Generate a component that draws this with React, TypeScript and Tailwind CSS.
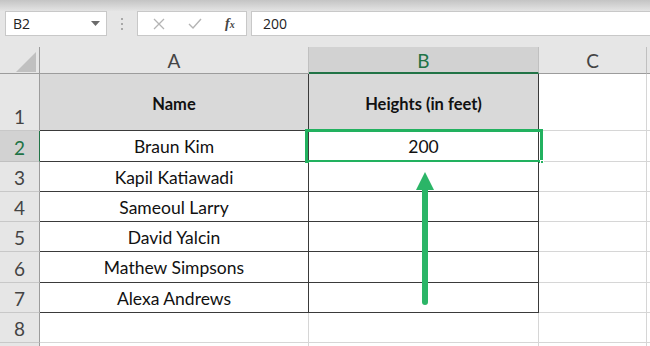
import React from "react";

type Row = { n: number; h: number; a?: string; b?: string; head?: boolean; table: boolean; hide?: boolean };

const rows: Row[] = [
  { n: 1, h: 57, a: "Name", b: "Heights (in feet)", head: true, table: true },
  { n: 2, h: 31, a: "Braun Kim", b: "200", table: true },
  { n: 3, h: 30, a: "Kapil Katiawadi", table: true },
  { n: 4, h: 30, a: "Sameoul Larry", table: true },
  { n: 5, h: 30, a: "David Yalcin", table: true },
  { n: 6, h: 31, a: "Mathew Simpsons", table: true },
  { n: 7, h: 30, a: "Alexa Andrews", table: true },
  { n: 8, h: 30, table: false },
  { n: 9, h: 12, table: false, hide: true },
];

const cellFont = { fontFamily: "Lato, 'Open Sans', sans-serif" };

export default function App() {
  return (
    <div className="w-[650px] h-[346px] overflow-hidden bg-[#e6e6e6] relative" style={cellFont}>
      {/* top shadow */}
      <div className="h-[11px] bg-gradient-to-b from-[#c4c4c4] to-[#e4e4e4]" />
      {/* formula bar */}
      <div className="h-[25px] flex items-stretch">
        <div
          className="ml-[5px] w-[102px] bg-white border border-[#c8c8c8] flex items-center pl-[7px] pr-[6px] text-[14px] text-[#222]"
          style={{ fontFamily: "'Open Sans', sans-serif" }}
        >
          <span className="flex-1">B2</span>
          <svg width="9" height="5" viewBox="0 0 9 5">
            <path d="M0 0 L9 0 L4.5 5 Z" fill="#6b6b6b" />
          </svg>
        </div>
        <div className="w-[30px] flex flex-col items-center justify-center gap-[3px]">
          <div className="w-[2px] h-[2px] bg-[#a8a8a8]" />
          <div className="w-[2px] h-[2px] bg-[#a8a8a8]" />
          <div className="w-[2px] h-[2px] bg-[#a8a8a8]" />
        </div>
        <div className="w-[110px] bg-white border border-[#c8c8c8] flex items-center">
          <svg className="ml-[15px]" width="12" height="12" viewBox="0 0 12 12">
            <path d="M1 1 L11 11 M11 1 L1 11" stroke="#b4b4b4" strokeWidth="1.3" />
          </svg>
          <svg className="ml-[23px]" width="14" height="11" viewBox="0 0 14 11">
            <path d="M1 6 L5 10 L13 1" stroke="#b4b4b4" strokeWidth="1.4" fill="none" />
          </svg>
          <span
            className="ml-[23px] text-[14px] italic text-[#444] font-bold"
            style={{ fontFamily: "'Liberation Serif', serif" }}
          >
            f<span className="text-[10px]">x</span>
          </span>
        </div>
        <div
          className="ml-[4px] flex-1 bg-white border border-[#c8c8c8] border-r-0 flex items-center pl-[11px] text-[14px] text-[#222]"
          style={{ fontFamily: "'Open Sans', sans-serif" }}
        >
          200
        </div>
      </div>
      <div className="h-[11px]" />
      {/* sheet */}
      <div className="relative">
        {/* column headers */}
        <div className="flex h-[27px] text-[19px] text-[#444]">
          <div className="w-[40px] border-r border-b border-[#9c9c9c] relative">
            <svg className="absolute left-[16px] top-[5px]" width="20" height="20" viewBox="0 0 20 20">
              <path d="M0 20 L20 20 L20 0 Z" fill="#c0c0c0" />
            </svg>
          </div>
          <div className="w-[269px] border-r border-b border-r-[#c0c0c0] border-b-[#9c9c9c] flex items-center justify-center pt-[2px]">
            A
          </div>
          <div className="w-[230px] bg-[#d2d2d2] border-r border-r-[#c0c0c0] border-b-2 border-b-[#217346] flex items-center justify-center pt-[3px] text-[#217346]">
            B
          </div>
          <div className="w-[108px] border-r border-b border-r-[#c0c0c0] border-b-[#9c9c9c] flex items-center justify-center pt-[2px]">
            C
          </div>
          <div className="flex-1 border-b border-[#9c9c9c]" />
        </div>
        {rows.map((r) => {
          const sel = r.n === 2;
          const tb = r.table ? "border-[#3a3a3a]" : "border-[#d6d6d6]";
          return (
            <div key={r.n} className="flex" style={{ height: r.h }}>
              <div
                className={`w-[40px] border-r border-b flex items-end justify-center pb-[1px] text-[19px] leading-[24px] ${
                  sel
                    ? "bg-[#d2d2d2] text-[#217346] border-r-[#217346] border-b-[#c0c0c0]"
                    : "text-[#444] border-r-[#9c9c9c] border-b-[#c8c8c8]"
                }`}
              >
                {r.hide ? null : r.n}
              </div>
              <div
                className={`w-[269px] border-r border-b ${tb} flex items-center justify-center text-[#111] ${
                  r.head ? "bg-[#d9d9d9] font-bold pt-[5px] text-[16.5px]" : "bg-white pt-[3px] text-[17.5px]"
                }`}
              >
                {r.a}
              </div>
              <div
                className={`w-[230px] border-r border-b ${tb} flex items-center justify-center text-[#111] relative ${
                  r.head ? "bg-[#d9d9d9] font-bold pt-[5px] text-[16.5px]" : "bg-white pt-[3px] text-[17.5px]"
                }`}
              >
                {r.b}
                {sel && (
                  <div className="absolute left-[-4px] right-[-5px] top-[-2px] bottom-[-2px] border-[3px] border-[#22b15f]">
                    <div className="absolute right-[-4px] bottom-[-4px] w-[4px] h-[4px] bg-[#22b15f] border border-white" />
                  </div>
                )}
              </div>
              <div className="w-[108px] border-r border-b border-[#d6d6d6] bg-white" />
              <div className="flex-1 border-b border-[#d6d6d6] bg-white" />
            </div>
          );
        })}
        {/* arrow */}
        <svg
          className="absolute left-[412px] top-[124px]"
          width="26"
          height="136"
          viewBox="0 0 26 136"
        >
          <path d="M13 18 L13 131" stroke="#2bb567" strokeWidth="6" strokeLinecap="round" />
          <path d="M4 19 L22 19 L13 1 Z" fill="#2bb567" />
        </svg>
      </div>
    </div>
  );
}
